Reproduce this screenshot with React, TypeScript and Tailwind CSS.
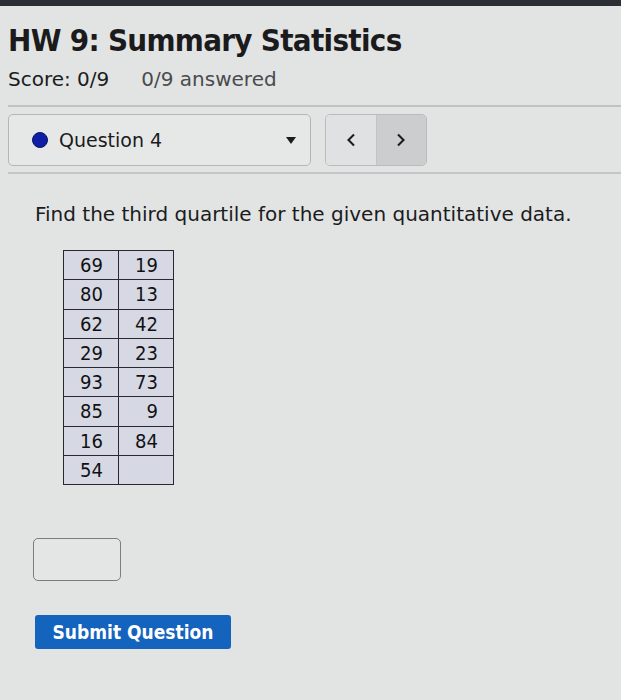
const ROWS: [string, string][] = [
  ['69', '19'],
  ['80', '13'],
  ['62', '42'],
  ['29', '23'],
  ['93', '73'],
  ['85', '9'],
  ['16', '84'],
  ['54', ''],
]

const SANS = '"DejaVu Sans", sans-serif'
const COND = '"DejaVu Sans Condensed", "DejaVu Sans", sans-serif'

export default function App() {
  return (
    <div className="min-h-[700px] bg-[#e2e4e3] text-[#1b1b1d]" style={{ fontFamily: SANS }}>
      {/* Top strip */}
      <div className="h-[6px] bg-[#2b2f35]" />

      <div className="pl-[8px]">
        {/* Heading */}
        <h1
          className="pt-[14px] text-[31px] leading-[40px] font-bold tracking-[-0.7px]"
          style={{ fontFamily: COND }}
        >
          HW 9: Summary Statistics
        </h1>
        <div className="mt-[4px] flex items-center gap-[32px] text-[20px] leading-[30px]">
          <span>Score: 0/9</span>
          <span className="text-[#4a4b4e]">0/9 answered</span>
        </div>

        <div className="mt-[11px] h-[2px] bg-[#bfc1c2]" />

        {/* Question picker */}
        <div className="mt-[7px] flex items-center gap-[14px]">
          <div className="flex h-[52px] w-[303px] items-center rounded-[5px] border border-[#b3b5b6] bg-[#e6e8e7] pl-[23px] pr-[14px]">
            <span className="h-[16px] w-[16px] rounded-full border border-[#0b1260] bg-[#0f1ea6]" />
            <span className="ml-[11px] text-[19px]">Question 4</span>
            <svg className="ml-auto" width="10" height="7" viewBox="0 0 10 7">
              <path d="M0 0h10L5 7z" fill="#1c1c1e" />
            </svg>
          </div>
          <div className="flex h-[52px] w-[102px] overflow-hidden rounded-[5px] border border-[#b9bbbc]">
            <div className="flex flex-1 items-center justify-center bg-[#dfe1e2]">
              <svg width="11" height="14" viewBox="0 0 11 14" fill="none" stroke="#1c1c1e" strokeWidth="2.1">
                <path d="M9 1.5 3.5 7 9 12.5" />
              </svg>
            </div>
            <div className="flex flex-1 items-center justify-center border-l border-[#c2c4c5] bg-[#cbcdce]">
              <svg width="11" height="14" viewBox="0 0 11 14" fill="none" stroke="#1c1c1e" strokeWidth="2.1">
                <path d="M2 1.5 7.5 7 2 12.5" />
              </svg>
            </div>
          </div>
        </div>

        <div className="mt-[6px] h-[2px] bg-[#c3c5c6]" />
      </div>

      {/* Question body */}
      <div className="pl-[35px]">
        <p className="mt-[26px] text-[20px] leading-[28px]">
          Find the third quartile for the given quantitative data.
        </p>

        <table
          className="ml-[28px] mt-[22px] border-collapse text-[20px] text-[#111114]"
          style={{ fontFamily: COND }}
        >
          <tbody>
            {ROWS.map((r, i) => (
              <tr key={i}>
                {r.map((v, j) => (
                  <td
                    key={j}
                    className="h-[29.25px] w-[55px] border-[1.5px] border-[#2a2730] bg-[#d6d9e3] pr-[15px] text-right leading-[26px]"
                  >
                    {v}
                  </td>
                ))}
              </tr>
            ))}
          </tbody>
        </table>

        <div className="-ml-[2px] mt-[53px] h-[43px] w-[88px] rounded-[5px] border-[1.5px] border-[#7c7d80] bg-[#e4e6e5]" />

        <button
          className="mt-[34px] h-[34px] w-[196px] rounded-[3px] bg-[#1463bd] text-[19px] font-bold text-white"
          style={{ fontFamily: COND }}
        >
          Submit Question
        </button>
      </div>
    </div>
  )
}
